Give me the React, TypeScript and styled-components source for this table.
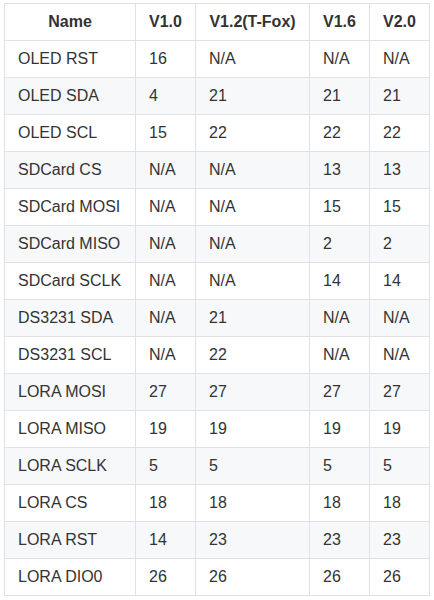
import styled, { createGlobalStyle } from 'styled-components';

const GlobalStyle = createGlobalStyle`
  body {
    margin: 0;
    background: #ffffff;
    font-family: "Liberation Sans", Arial, sans-serif;
    color: #333333;
  }
`;

const Wrapper = styled.div`
  padding: 3px 0 0 4px;
`;

const Table = styled.table`
  border-collapse: collapse;
  table-layout: fixed;
  width: 425px;
  font-size: 16px;
  line-height: 20px;
`;

const Th = styled.th`
  border: 1px solid #dfe2e5;
  padding: 8px 13px;
  height: 20px;
  font-weight: bold;
  text-align: center;
  white-space: nowrap;
`;

const Td = styled.td`
  border: 1px solid #dfe2e5;
  padding: 8px 13px;
  height: 20px;
  text-align: left;
  white-space: nowrap;
`;

const Row = styled.tr<{ $striped: boolean }>`
  background: ${(p) => (p.$striped ? '#f6f8fa' : '#ffffff')};
`;

const columns = ['Name', 'V1.0', 'V1.2(T-Fox)', 'V1.6', 'V2.0'];
const widths = [131, 60, 114, 60, 60];

const rows: string[][] = [
  ['OLED RST', '16', 'N/A', 'N/A', 'N/A'],
  ['OLED SDA', '4', '21', '21', '21'],
  ['OLED SCL', '15', '22', '22', '22'],
  ['SDCard CS', 'N/A', 'N/A', '13', '13'],
  ['SDCard MOSI', 'N/A', 'N/A', '15', '15'],
  ['SDCard MISO', 'N/A', 'N/A', '2', '2'],
  ['SDCard SCLK', 'N/A', 'N/A', '14', '14'],
  ['DS3231 SDA', 'N/A', '21', 'N/A', 'N/A'],
  ['DS3231 SCL', 'N/A', '22', 'N/A', 'N/A'],
  ['LORA MOSI', '27', '27', '27', '27'],
  ['LORA MISO', '19', '19', '19', '19'],
  ['LORA SCLK', '5', '5', '5', '5'],
  ['LORA CS', '18', '18', '18', '18'],
  ['LORA RST', '14', '23', '23', '23'],
  ['LORA DIO0', '26', '26', '26', '26'],
];

export default function App() {
  return (
    <>
      <GlobalStyle />
      <Wrapper>
        <Table>
          <colgroup>
            {widths.map((w, i) => (
              <col key={i} style={{ width: w }} />
            ))}
          </colgroup>
          <thead>
            <Row $striped={false}>
              {columns.map((c) => (
                <Th key={c}>{c}</Th>
              ))}
            </Row>
          </thead>
          <tbody>
            {rows.map((r, i) => (
              <Row key={r[0]} $striped={i % 2 === 1}>
                {r.map((cell, j) => (
                  <Td key={j}>{cell}</Td>
                ))}
              </Row>
            ))}
          </tbody>
        </Table>
      </Wrapper>
    </>
  );
}
